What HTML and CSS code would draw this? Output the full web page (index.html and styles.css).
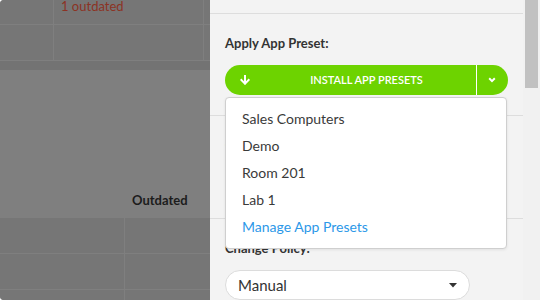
FILE: index.html
```html
<!DOCTYPE html>
<html lang="en">
<head>
<meta charset="utf-8">
<title>App Presets</title>
<link rel="stylesheet" href="styles.css">
</head>
<body>
<div class="screen">
  <div class="backdrop">
    <div class="trow trow-a">
      <div class="cell"></div>
      <div class="cell"><span class="outdated-count">1 outdated</span></div>
      <div class="cell"></div>
    </div>
    <div class="trow trow-b">
      <div class="cell"></div>
      <div class="cell"></div>
      <div class="cell"></div>
    </div>
    <div class="band"></div>
    <div class="thead">
      <div class="hcell"></div>
      <div class="hcell hlabel">Outdated</div>
    </div>
    <div class="brow"><div class="bcell"></div><div class="bcell"></div></div>
    <div class="brow"><div class="bcell"></div><div class="bcell"></div></div>
    <div class="brow"><div class="bcell"></div><div class="bcell"></div></div>
  </div>

  <div class="panel">
    <div class="panel-top"></div>
    <section class="sec">
      <h3 class="sec-title">Apply App Preset:</h3>
      <div class="split-wrap">
        <div class="split-btn">
          <button class="split-main" type="button">
            <svg class="icon-down" width="10" height="10" viewBox="0 0 10 10" aria-hidden="true">
              <path d="M5 0.5 V8.5 M1.3 5 L5 8.7 L8.7 5" fill="none" stroke="#fff" stroke-width="2" stroke-linecap="square"/>
            </svg>
            <span class="split-label">INSTALL APP PRESETS</span>
          </button>
          <button class="split-toggle" type="button" aria-label="More">
            <svg width="8" height="6" viewBox="0 0 8 6" aria-hidden="true">
              <path d="M1.2 1.3 L4 4.1 L6.8 1.3" fill="none" stroke="#fff" stroke-width="2"/>
            </svg>
          </button>
        </div>
        <ul class="menu">
          <li class="menu-item">Sales Computers</li>
          <li class="menu-item">Demo</li>
          <li class="menu-item">Room 201</li>
          <li class="menu-item">Lab 1</li>
          <li class="menu-item menu-link">Manage App Presets</li>
        </ul>
      </div>
    </section>
    <section class="sec sec-mid">
      <h3 class="sec-title">Change Group:</h3>
      <div class="select"><span>None</span><svg width="8" height="5" viewBox="0 0 8 5"><polygon points="0,0 8,0 4,4.5" fill="#333"/></svg></div>
    </section>
    <section class="sec">
      <h3 class="sec-title">Change Policy:</h3>
      <div class="select"><span>Manual</span><svg width="8" height="5" viewBox="0 0 8 5"><polygon points="0,0 8,0 4,4.5" fill="#333"/></svg></div>
    </section>
  </div>

  <div class="scrollbar"><div class="thumb"></div></div>
</div>
</body>
</html>
```

FILE: styles.css
```css
* { box-sizing: border-box; }

html, body {
  margin: 0;
  padding: 0;
  background: #ffffff;
  font-family: Lato, "Open Sans", sans-serif;
}

.screen {
  display: flex;
  width: 540px;
  height: 300px;
  overflow: hidden;
}

/* ---------- dimmed page on the left ---------- */
.backdrop {
  flex: none;
  width: 210px;
  height: 300px;
  display: flex;
  flex-direction: column;
  background: #7f7f7f;
  border-radius: 4px 0 0 4px;
  overflow: hidden;
}

.trow {
  flex: none;
  display: grid;
  grid-template-columns: 54px 150px 1fr;
  background: #767676;
  border-bottom: 1px solid #7f7f7f;
}
.trow-a { height: 25px; }
.trow-b { height: 36px; }

.trow .cell { border-right: 1px solid #7f7f7f; }
.trow .cell:last-child { border-right: none; }

.outdated-count {
  display: block;
  padding-left: 7px;
  font-size: 13px;
  line-height: 13px;
  color: #8c3324;
}

.band {
  flex: none;
  height: 9px;
  background: #737373;
}

.thead {
  flex: none;
  height: 148px;
  display: grid;
  grid-template-columns: 125px 1fr;
  align-items: end;
  background: #7f7f7f;
}
.hlabel {
  padding: 0 0 9px 7px;
  font-size: 13px;
  font-weight: 700;
  line-height: 18px;
  color: #1c1c1c;
}

.brow {
  flex: none;
  height: 36px;
  display: grid;
  grid-template-columns: 125px 1fr;
  background: #767676;
  border-bottom: 1px solid #7f7f7f;
}
.brow .bcell:first-child { border-right: 1px solid #7f7f7f; }

/* ---------- side panel ---------- */
.panel {
  flex: none;
  width: 313px;
  height: 300px;
  background: #f3f3f3;
  overflow: hidden;
}

.panel-top {
  height: 14px;
  border-bottom: 1px solid #dddddd;
}

.sec {
  padding: 20px 15px 20px;
  border-bottom: 1px solid #dddddd;
}
.sec-mid { padding-bottom: 21px; }

.sec-title {
  margin: 0 0 13px;
  font-size: 13px;
  font-weight: 700;
  line-height: 18px;
  color: #333333;
}

.split-wrap { position: relative; }

.split-btn {
  display: flex;
  height: 30px;
  border-radius: 15px;
  background: #6dd300;
  overflow: hidden;
}

.split-main,
.split-toggle {
  margin: 0;
  border: none;
  background: transparent;
  color: #ffffff;
  font-family: inherit;
  cursor: pointer;
}

.split-main {
  flex: 1;
  display: flex;
  align-items: center;
  padding: 0 0 0 15px;
}
.icon-down { flex: none; display: block; }
.split-label {
  flex: 1;
  margin-left: 7px;
  text-align: center;
  font-size: 11px;
  font-weight: 600;
  line-height: 30px;
}

.split-toggle {
  flex: none;
  width: 32px;
  display: flex;
  align-items: center;
  justify-content: center;
  padding: 0 1px 1px 0;
  border-left: 1px solid #ffffff;
}
.split-toggle svg { display: block; }

.menu {
  position: absolute;
  top: calc(100% + 2px);
  left: 0;
  right: 1px;
  z-index: 5;
  margin: 0;
  padding: 7px 0 8px;
  list-style: none;
  background: #ffffff;
  border: 1px solid #cfcfcf;
  border-radius: 4px;
  box-shadow: 0 1px 3px rgba(0, 0, 0, 0.08);
}
.menu-item {
  height: 27px;
  padding: 0 16px;
  font-size: 14px;
  line-height: 27px;
  color: #3a3a3a;
}
.menu-link { color: #2c98e8; }

.select {
  display: flex;
  align-items: center;
  justify-content: space-between;
  width: 245px;
  height: 30px;
  padding: 0 12px 0 12px;
  background: #ffffff;
  border: 1px solid #dcdcdc;
  border-radius: 15px;
  font-size: 15px;
  color: #333333;
}
.select svg { display: block; }

/* ---------- scrollbar ---------- */
.scrollbar {
  flex: none;
  width: 17px;
  height: 300px;
  background: #f1f1f1;
}
.thumb {
  width: 13px;
  height: 88px;
  margin-left: 2px;
  background: #c1c1c1;
}
```
